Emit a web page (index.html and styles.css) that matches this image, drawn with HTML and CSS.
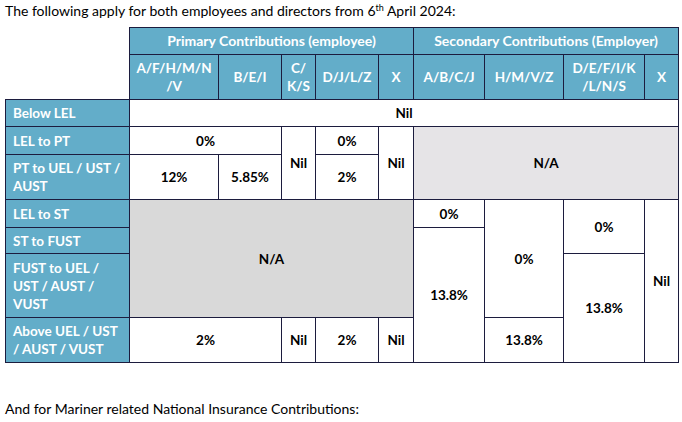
FILE: index.html
```html
<!DOCTYPE html>
<html>
<head>
<meta charset="utf-8">
<link rel="stylesheet" href="styles.css">
</head>
<body>
<p class="intro">The following apply for both employees and directors from 6<sup>th</sup> April 2024:</p>
<table class="ni">
  <colgroup>
    <col class="c-label">
    <col class="c1"><col class="c2"><col class="c3"><col class="c4"><col class="c5">
    <col class="c6"><col class="c7"><col class="c8"><col class="c9">
  </colgroup>
  <tr class="h1">
    <td class="blank" rowspan="2"></td>
    <th class="group" colspan="5">Primary Contributions (employee)</th>
    <th class="group" colspan="4">Secondary Contributions (Employer)</th>
  </tr>
  <tr class="h2">
    <th>A/F/H/M/N<br>/V</th>
    <th>B/E/I</th>
    <th>C/<br>K/S</th>
    <th>D/J/L/Z</th>
    <th>X</th>
    <th>A/B/C/J</th>
    <th>H/M/V/Z</th>
    <th>D/E/F/I/K<br>/L/N/S</th>
    <th>X</th>
  </tr>
  <tr class="r1">
    <th class="lbl">Below LEL</th>
    <td colspan="9">Nil</td>
  </tr>
  <tr class="r2">
    <th class="lbl">LEL to PT</th>
    <td colspan="2">0%</td>
    <td rowspan="2">Nil</td>
    <td>0%</td>
    <td rowspan="2">Nil</td>
    <td class="na-light" colspan="4" rowspan="2">N/A</td>
  </tr>
  <tr class="r3">
    <th class="lbl">PT to UEL / UST /<br>AUST</th>
    <td>12%</td>
    <td>5.85%</td>
    <td>2%</td>
  </tr>
  <tr class="r4">
    <th class="lbl">LEL to ST</th>
    <td class="na" colspan="5" rowspan="3">N/A</td>
    <td>0%</td>
    <td rowspan="3">0%</td>
    <td rowspan="2">0%</td>
    <td rowspan="4">Nil</td>
  </tr>
  <tr class="r5">
    <th class="lbl">ST to FUST</th>
    <td rowspan="3">13.8%</td>
  </tr>
  <tr class="r6">
    <th class="lbl">FUST to UEL /<br>UST / AUST /<br>VUST</th>
    <td rowspan="2">13.8%</td>
  </tr>
  <tr class="r7">
    <th class="lbl">Above UEL / UST<br>/ AUST / VUST</th>
    <td colspan="2">2%</td>
    <td>Nil</td>
    <td>2%</td>
    <td>Nil</td>
    <td>13.8%</td>
  </tr>
</table>
<p class="outro">And for Mariner related National Insurance Contributions:</p>
</body>
</html>
```

FILE: styles.css
```css
html, body {
  margin: 0;
  padding: 0;
  background: #ffffff;
}
body {
  font-family: Lato, "Liberation Sans", sans-serif;
  font-size: 14px;
  color: #000;
  padding-left: 5px;
}
.intro {
  margin: 0;
  padding-top: 3px;
  height: 24px;
  line-height: 16px;
  font-size: 14px;
}
.intro sup {
  font-size: 9px;
  line-height: 0;
  vertical-align: 5px;
}
.ni {
  border-collapse: collapse;
  table-layout: fixed;
  width: 673px;
  font-weight: bold;
  font-size: 13.5px;
  line-height: 18px;
}
.ni col.c-label { width: 124px; }
.ni col.c1 { width: 89px; }
.ni col.c2 { width: 63px; }
.ni col.c3 { width: 34px; }
.ni col.c4 { width: 63px; }
.ni col.c5 { width: 35px; }
.ni col.c6 { width: 71px; }
.ni col.c7 { width: 79px; }
.ni col.c8 { width: 81px; }
.ni col.c9 { width: 34px; }
.ni th, .ni td {
  border: 1px solid #1c1c3e;
  padding: 0 2px;
  text-align: center;
  vertical-align: middle;
  overflow: hidden;
}
.ni th {
  background: #63adc9;
  color: #ffffff;
  font-weight: bold;
}
.ni th.group {
  font-size: 14px;
  white-space: nowrap;
}
.ni td.blank {
  border: none;
  background: #fff;
}
.ni th.lbl {
  text-align: left;
  padding-left: 7px;
  white-space: nowrap;
}
.ni td {
  background: #ffffff;
  color: #000;
}
.ni td.na-light { background: #e6e4e7; }
.ni td.na { background: #d9d9d9; }
.h1 { height: 27px; }
.h2 { height: 45px; }
.r1 { height: 27px; }
.r2 { height: 28px; }
.r3 { height: 45px; }
.r4 { height: 28px; }
.r5 { height: 26px; }
.r6 { height: 64px; }
.r7 { height: 45px; }
.outro {
  margin: 0;
  padding-top: 38px;
  line-height: 16px;
  font-size: 14px;
}
```
